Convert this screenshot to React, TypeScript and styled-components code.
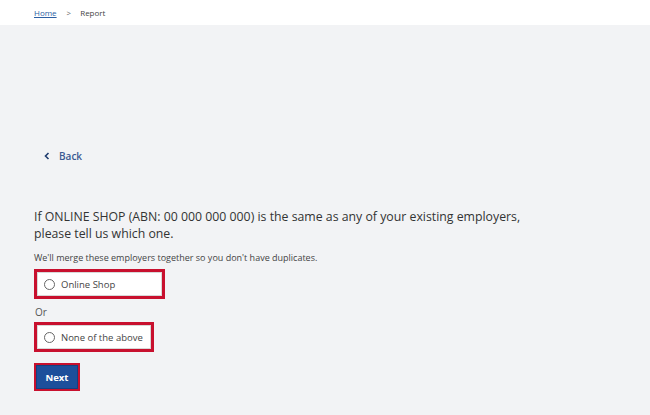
import React, { useState } from 'react';
import styled, { createGlobalStyle } from 'styled-components';

const GlobalStyle = createGlobalStyle`
  html, body {
    margin: 0;
    padding: 0;
    background: #f2f3f5;
    font-family: "Open Sans", "Noto Sans", sans-serif;
    color: #313131;
  }
`;

const Header = styled.header`
  background: #ffffff;
  height: 25px;
  display: flex;
  align-items: center;
  padding-left: 34px;
  font-size: 8px;
  color: #444;
`;

const Crumb = styled.a`
  color: #2d5fa3;
  text-decoration: underline;
`;

const Sep = styled.span`
  margin: 0 9px 0 10px;
  color: #666;
`;

const Main = styled.main`
  padding: 124px 34px 0 34px;
  display: flex;
  flex-direction: column;
  align-items: flex-start;
`;

const BackLink = styled.a`
  display: flex;
  align-items: center;
  gap: 9px;
  margin-left: 10px;
  color: #3a5a92;
  font-size: 10px;
  font-weight: 600;
  text-decoration: none;
`;

const Heading = styled.h1`
  margin: 45px 0 0 0;
  font-size: 12.3px;
  font-weight: 400;
  line-height: 17px;
  color: #333;
`;

const Hint = styled.p`
  margin: 9px 0 0 0;
  font-size: 9px;
  color: #444;
`;

const Highlight = styled.div<{ $width: number }>`
  border: 3px solid #c8102e;
  width: ${(p) => p.$width}px;
  box-sizing: border-box;
`;

const OptionBox = styled.label`
  display: flex;
  align-items: center;
  gap: 6px;
  height: 22px;
  padding-left: 6px;
  background: #ffffff;
  border: 1px solid #d8d8d8;
  font-size: 9.5px;
  color: #444;
  cursor: pointer;
`;

const Radio = styled.span<{ $checked: boolean }>`
  width: 9px;
  height: 9px;
  border-radius: 50%;
  border: 1.3px solid #666;
  display: flex;
  align-items: center;
  justify-content: center;
  &::after {
    content: '';
    width: 5px;
    height: 5px;
    border-radius: 50%;
    background: ${(p) => (p.$checked ? '#1d4f9b' : 'transparent')};
  }
`;

const OrText = styled.div`
  margin: 6px 0 3px 1px;
  font-size: 10px;
  color: #555;
`;

const Gap = styled.div`
  height: 5px;
`;

const ButtonFrame = styled.div`
  margin-top: 11px;
  border: 2px solid #c8102e;
`;

const NextButton = styled.button`
  display: block;
  background: #1d4f9b;
  color: #ffffff;
  border: 1px solid #16407f;
  font-family: inherit;
  font-size: 9.5px;
  font-weight: 700;
  width: 42px;
  height: 24px;
  padding: 0;
  cursor: pointer;
`;

const options = [
  { id: 'online', label: 'Online Shop', width: 131 },
  { id: 'none', label: 'None of the above', width: 120 },
];

const App: React.FC = () => {
  const [selected, setSelected] = useState<string>('');

  return (
    <>
      <GlobalStyle />
      <Header>
        <Crumb href="#">Home</Crumb>
        <Sep>&gt;</Sep>
        <span>Report</span>
      </Header>
      <Main>
        <BackLink href="#">
          <svg width="6" height="8" viewBox="0 0 6 8">
            <path d="M4.5 1 L1.5 4 L4.5 7" fill="none" stroke="#1f3c6e" strokeWidth="1.6" />
          </svg>
          Back
        </BackLink>

        <Heading>
          If ONLINE SHOP (ABN: 00 000 000 000) is the same as any of your existing employers,
          <br />
          please tell us which one.
        </Heading>
        <Hint>We&apos;ll merge these employers together so you don&apos;t have duplicates.</Hint>

        <Gap />
        <Highlight $width={options[0].width}>
          <OptionBox onClick={() => setSelected(options[0].id)}>
            <Radio $checked={selected === options[0].id} />
            {options[0].label}
          </OptionBox>
        </Highlight>
        <OrText>Or</OrText>
        <Highlight $width={options[1].width}>
          <OptionBox onClick={() => setSelected(options[1].id)}>
            <Radio $checked={selected === options[1].id} />
            {options[1].label}
          </OptionBox>
        </Highlight>

        <ButtonFrame>
          <NextButton type="button">Next</NextButton>
        </ButtonFrame>
      </Main>
    </>
  );
};

export default App;
